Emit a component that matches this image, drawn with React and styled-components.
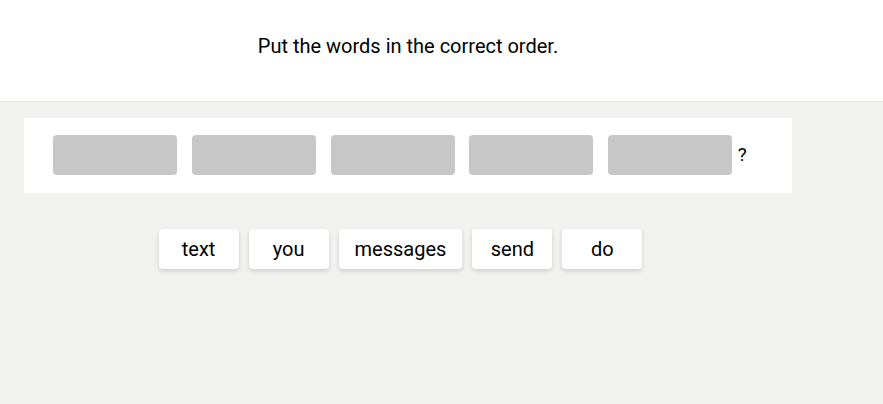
import React from "react";
import styled, { createGlobalStyle } from "styled-components";

const GlobalStyle = createGlobalStyle`
  html, body {
    margin: 0;
    padding: 0;
    background: #f1f1f0;
    font-family: Roboto, "Liberation Sans", sans-serif;
    color: #000;
  }
`;

const Page = styled.div`
  width: 100%;
  min-height: 404px;
  background: #f1f1f0;
`;

const Header = styled.div`
  height: 102px;
  background: #fff;
  border-bottom: 1px solid #e6e6e4;
  display: flex;
  justify-content: center;
  padding-right: 67px;
  box-sizing: border-box;
`;

const Title = styled.h1`
  margin: 34px 0 0 0;
  font-size: 20px;
  font-weight: 400;
  line-height: 24px;
`;

const Main = styled.div`
  width: 816px;
  padding: 16px 24px 0 24px;
  box-sizing: border-box;
`;

const Sentence = styled.div`
  background: #fff;
  height: 75px;
  box-sizing: border-box;
  display: flex;
  align-items: flex-start;
  padding: 17px 0 0 29px;
  gap: 14.75px;
`;

const Slot = styled.div`
  width: 124px;
  height: 40px;
  border-radius: 4px;
  background: #c7c7c7;
`;

const Mark = styled.span`
  font-size: 19px;
  line-height: 40px;
  margin-left: -9px;
`;

const Words = styled.div`
  display: flex;
  justify-content: center;
  gap: 10px;
  margin-top: 36px;
  padding-right: 15px;
`;

const Word = styled.button`
  min-width: 80px;
  height: 40px;
  padding: 0 16px;
  box-sizing: border-box;
  border: none;
  border-radius: 4px;
  background: #fff;
  box-shadow: 0 2px 4px rgba(0, 0, 0, 0.15);
  font-family: Roboto, "Liberation Sans", sans-serif;
  font-size: 20px;
  color: #000;
  cursor: pointer;
`;

const words = ["text", "you", "messages", "send", "do"];

export default function App() {
  return (
    <Page>
      <GlobalStyle />
      <Header>
        <Title>Put the words in the correct order.</Title>
      </Header>
      <Main>
        <Sentence>
          {words.map((w) => (
            <Slot key={w} />
          ))}
          <Mark>?</Mark>
        </Sentence>
        <Words>
          {words.map((w) => (
            <Word key={w}>{w}</Word>
          ))}
        </Words>
      </Main>
    </Page>
  );
}
